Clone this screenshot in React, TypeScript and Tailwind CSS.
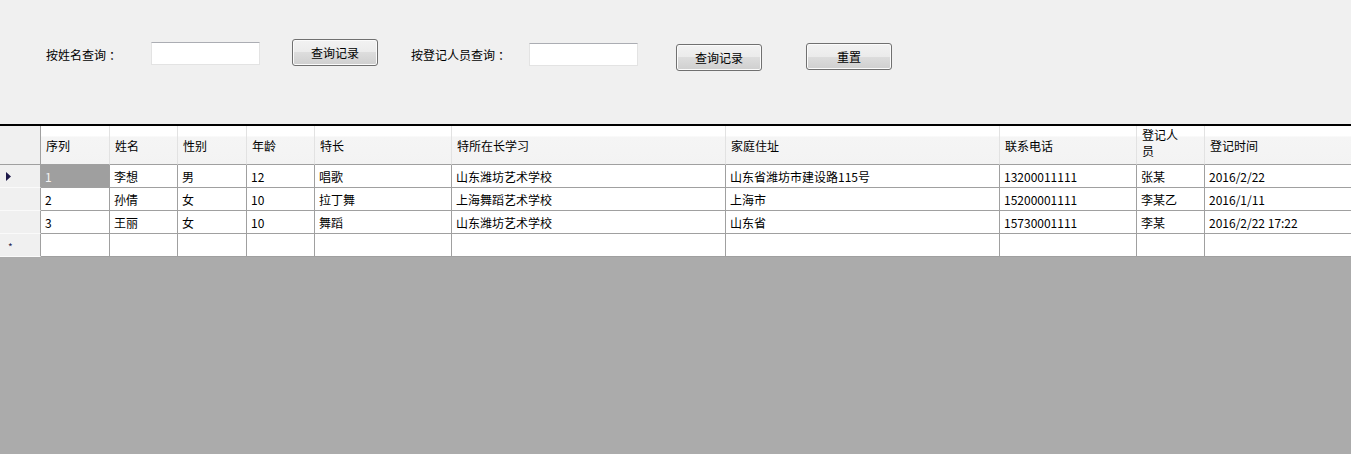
import React from "react";

const cols = [
  { w: 69, h: "序列" },
  { w: 68, h: "姓名" },
  { w: 69, h: "性别" },
  { w: 68, h: "年龄" },
  { w: 137, h: "特长" },
  { w: 274, h: "特所在长学习" },
  { w: 274, h: "家庭住址" },
  { w: 137, h: "联系电话" },
  { w: 68, h: "登记人员" },
  { w: 200, h: "登记时间" },
];

const rows = [
  ["1", "李想", "男", "12", "唱歌", "山东潍坊艺术学校", "山东省潍坊市建设路115号", "13200011111", "张某", "2016/2/22"],
  ["2", "孙倩", "女", "10", "拉丁舞", "上海舞蹈艺术学校", "上海市", "15200001111", "李某乙", "2016/1/11"],
  ["3", "王丽", "女", "10", "舞蹈", "山东潍坊艺术学校", "山东省", "15730001111", "李某", "2016/2/22 17:22"],
];

const font = { fontFamily: '"Noto Sans CJK SC", "Liberation Sans", sans-serif' };

function Btn({ label, className }: { label: string; className?: string }) {
  return (
    <button
      className={
        "w-[86px] h-[27px] rounded-[3px] border border-[#707070] text-[12px] text-black bg-[linear-gradient(to_bottom,#f2f2f2_0%,#ebebeb_50%,#dddddd_50%,#cfcfcf_100%)] shadow-[inset_0_0_0_1px_#fbfbfb] " +
        (className ?? "")
      }
    >
      {label}
    </button>
  );
}

function Input({ className }: { className?: string }) {
  return (
    <div
      className={
        "w-[109px] h-[23px] bg-white border border-[#e3e3e3] border-t-[#abadb3] " + (className ?? "")
      }
    />
  );
}

export default function App() {
  return (
    <div className="w-[1351px] h-[454px] bg-[#ababab] overflow-hidden flex flex-col" style={font}>
      <div className="h-[124px] bg-[#f0f0f0] flex items-start text-[12px] text-black shrink-0">
        <span className="ml-[46px] mt-[46px]">按姓名查询<span className="ml-[3px]">：</span></span>
        <Input className="ml-[30px] mt-[42px]" />
        <Btn label="查询记录" className="ml-[32px] mt-[39px]" />
        <span className="ml-[33px] mt-[46px]">按登记人员查询<span className="ml-[3px]">：</span></span>
        <Input className="ml-[19px] mt-[43px]" />
        <Btn label="查询记录" className="ml-[38px] mt-[44px]" />
        <Btn label="重置" className="ml-[44px] mt-[43px]" />
      </div>
      <div className="h-[2px] bg-[#000] shrink-0" />
      <div className="flex flex-col text-[12px] text-black shrink-0">
        {/* header */}
        <div className="flex h-[39px]">
          <div className="w-[41px] h-full shrink-0 bg-[#f0f0f0] border-r border-[#a0a0a0] border-b border-b-[#a0a0a0]" />
          {cols.map((c, i) => (
            <div
              key={i}
              className="shrink-0 h-full border-r border-r-[#e2e2e2] border-b border-b-[#a0a0a0] bg-[linear-gradient(to_bottom,#ffffff_0%,#ffffff_25%,#f5f5f5_30%,#f3f3f3_100%)] flex items-center pl-[5px] leading-[16px]"
              style={{ width: c.w }}
            >
              {c.h === "登记人员" ? (
                <span className="-mt-[4px]">
                  登记人
                  <br />员
                </span>
              ) : (
                <span className="mt-[1px]">{c.h}</span>
              )}
            </div>
          ))}
        </div>
        {[...rows, null].map((r, ri) => (
          <div key={ri} className="flex h-[23px]">
            <div className="w-[41px] h-full shrink-0 bg-[#f0f0f0] border-r border-r-[#a0a0a0] border-b border-b-[#fafafa] relative flex items-center">
              {ri === 0 && (
                <svg width="5" height="9" viewBox="0 0 5 9" className="ml-[6px] mt-[1px]">
                  <path d="M0 0 L5 4.5 L0 9 Z" fill="#1e1a4a" />
                </svg>
              )}
              {r === null && (
                <span className="ml-[8px] mt-[4px] text-[10px] leading-none text-[#2b2950]">*</span>
              )}
            </div>
            {cols.map((c, ci) => {
              const sel = ri === 0 && ci === 0;
              return (
                <div
                  key={ci}
                  className={
                    "shrink-0 h-full border-r border-b border-[#a0a0a0] flex items-center pl-[4px] pt-[2px] whitespace-nowrap " +
                    (sel ? "bg-[#9f9f9f] text-[#f4f4f4]" : "bg-white")
                  }
                  style={{ width: c.w }}
                >
                  {r ? r[ci] : ""}
                </div>
              );
            })}
          </div>
        ))}
      </div>
    </div>
  );
}
